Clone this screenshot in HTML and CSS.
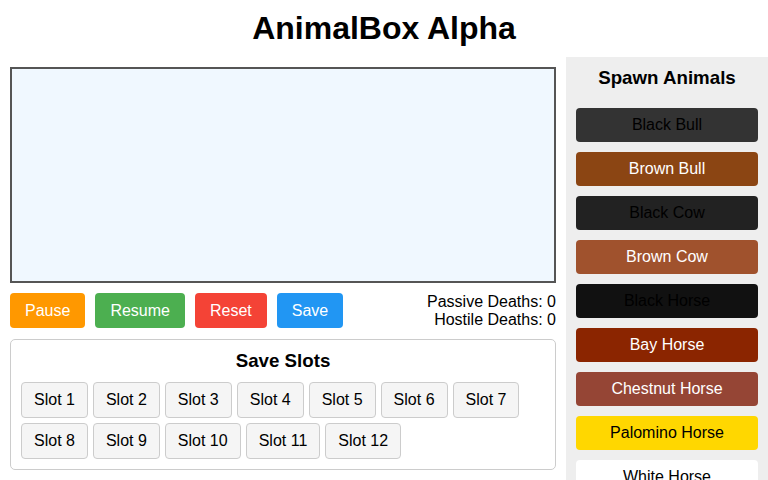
FILE: index.html
```html
<!DOCTYPE html>
<html>
<head>
	<title>AnimalBox Alpha</title>
	<link rel="stylesheet" href="styles.css">
</head>
<body>
	<h1>AnimalBox Alpha</h1>
	<div class="layout">
		<div class="main">
			<div id="world" class="world"></div>
			<div class="controls">
				<div class="control_buttons">
					<button class="ctl pause">Pause</button>
					<button class="ctl resume">Resume</button>
					<button class="ctl reset">Reset</button>
					<button class="ctl save">Save</button>
				</div>
				<div class="stats">
					<div>Passive Deaths: <span id="passive">0</span></div>
					<div>Hostile Deaths: <span id="hostile">0</span></div>
				</div>
			</div>
			<div class="slots">
				<h3>Save Slots</h3>
				<div class="slot_list">
					<button class="slot">Slot 1</button>
					<button class="slot">Slot 2</button>
					<button class="slot">Slot 3</button>
					<button class="slot">Slot 4</button>
					<button class="slot">Slot 5</button>
					<button class="slot">Slot 6</button>
					<button class="slot">Slot 7</button>
					<button class="slot">Slot 8</button>
					<button class="slot">Slot 9</button>
					<button class="slot">Slot 10</button>
					<button class="slot">Slot 11</button>
					<button class="slot">Slot 12</button>
				</div>
			</div>
		</div>
		<div class="sidebar">
			<h3>Spawn Animals</h3>
			<button class="spawn black_bull">Black Bull</button>
			<button class="spawn brown_bull">Brown Bull</button>
			<button class="spawn black_cow">Black Cow</button>
			<button class="spawn brown_cow">Brown Cow</button>
			<button class="spawn black_horse">Black Horse</button>
			<button class="spawn bay_horse">Bay Horse</button>
			<button class="spawn chestnut_horse">Chestnut Horse</button>
			<button class="spawn palomino_horse">Palomino Horse</button>
			<button class="spawn white_horse">White Horse</button>
		</div>
	</div>
</body>
</html>
```

FILE: styles.css
```css
body{
	margin: 0;
	font-family: "Liberation Sans", Arial, sans-serif;
	color: #000;
	background: #fff;
}
h1{
	margin: 0;
	padding: 10px;
	text-align: center;
	font-size: 32px;
}
.layout{
	display: flex;
}
.main{
	flex: 1;
	padding: 10px;
}
.world{
	height: 212px;
	background-color: aliceblue;
	border: 2px solid #555;
}
.controls{
	display: flex;
	justify-content: space-between;
	margin: 10px 0;
}
.control_buttons{
	display: flex;
	gap: 10px;
	align-items: flex-start;
}
button{
	font-family: "Liberation Sans", Arial, sans-serif;
	font-size: 16px;
	cursor: pointer;
}
.ctl{
	padding: 8px 15px;
	border: none;
	border-radius: 4px;
	color: #fff;
	line-height: 19px;
}
.pause{ background-color: #ff9800; }
.resume{ background-color: #4caf50; }
.reset{ background-color: #f44336; }
.save{ background-color: #2196f3; }
.stats{
	text-align: right;
	font-size: 16px;
}
.slots{
	border: 1px solid #ccc;
	border-radius: 5px;
	padding: 10px;
}
.slots h3{
	margin: 0 0 10px;
	text-align: center;
	font-size: 18.72px;
}
.slot_list{
	display: flex;
	flex-wrap: wrap;
	gap: 5px;
}
.slot{
	padding: 8px 12px;
	background-color: #f5f5f5;
	border: 1px solid #ccc;
	border-radius: 4px;
	color: #000;
}
.sidebar{
	width: 182px;
	padding: 10px;
	background-color: #eee;
	display: flex;
	flex-direction: column;
	gap: 10px;
}
.sidebar h3{
	margin: 0 0 9px;
	text-align: center;
	font-size: 18.72px;
}
.spawn{
	padding: 8px;
	border: none;
	border-radius: 4px;
	color: #fff;
	line-height: 18px;
}
.black_bull{ background-color: #333; color: #000; }
.brown_bull{ background-color: #8b4513; }
.black_cow{ background-color: #222; color: #000; }
.brown_cow{ background-color: #a0522d; }
.black_horse{ background-color: #111; color: #000; }
.bay_horse{ background-color: #8b2500; }
.chestnut_horse{ background-color: #954535; }
.palomino_horse{ background-color: #ffd700; color: #000; }
.white_horse{ background-color: #fff; color: #000; }
```
